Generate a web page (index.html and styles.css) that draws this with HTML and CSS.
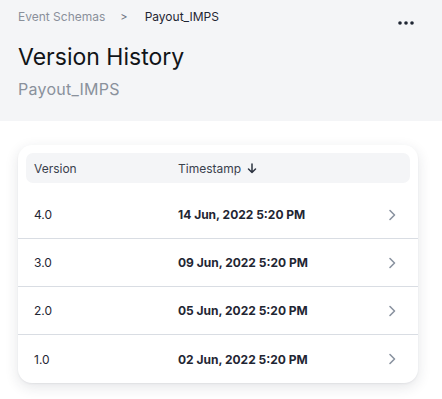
FILE: index.html
```html
<!DOCTYPE html>
<html>
<head>
<meta charset="utf-8">
<link rel="stylesheet" href="styles.css">
</head>
<body>
<header class="top">
  <div class="crumbs">
    <span class="crumb-muted">Event Schemas</span>
    <span class="crumb-sep">&gt;</span>
    <span class="crumb-current">Payout_IMPS</span>
  </div>
  <button class="more" aria-label="More">
    <svg width="16" height="4" viewBox="0 0 16 4"><circle cx="2" cy="2" r="1.8"/><circle cx="8" cy="2" r="1.8"/><circle cx="14" cy="2" r="1.8"/></svg>
  </button>
  <h1 class="title">Version History</h1>
  <div class="subtitle">Payout_IMPS</div>
</header>
<main class="content">
  <div class="card">
    <div class="thead">
      <div class="col-version">Version</div>
      <div class="col-time">Timestamp
        <svg class="arrow" width="10" height="11" viewBox="0 0 10 11"><path d="M5 1v8.5M1.5 6L5 9.5 8.5 6" fill="none" stroke="#2d3441" stroke-width="1.5" stroke-linecap="round" stroke-linejoin="round"/></svg>
      </div>
    </div>
    <div class="row">
      <div class="col-version">4.0</div>
      <div class="col-time ts">14 Jun, 2022 5:20 PM</div>
      <svg class="chev" width="8" height="12" viewBox="0 0 8 12"><path d="M2 1.5L6.5 6 2 10.5" fill="none" stroke="#8a93a0" stroke-width="1.6" stroke-linecap="round" stroke-linejoin="round"/></svg>
    </div>
    <div class="row">
      <div class="col-version">3.0</div>
      <div class="col-time ts">09 Jun, 2022 5:20 PM</div>
      <svg class="chev" width="8" height="12" viewBox="0 0 8 12"><path d="M2 1.5L6.5 6 2 10.5" fill="none" stroke="#8a93a0" stroke-width="1.6" stroke-linecap="round" stroke-linejoin="round"/></svg>
    </div>
    <div class="row">
      <div class="col-version">2.0</div>
      <div class="col-time ts">05 Jun, 2022 5:20 PM</div>
      <svg class="chev" width="8" height="12" viewBox="0 0 8 12"><path d="M2 1.5L6.5 6 2 10.5" fill="none" stroke="#8a93a0" stroke-width="1.6" stroke-linecap="round" stroke-linejoin="round"/></svg>
    </div>
    <div class="row">
      <div class="col-version">1.0</div>
      <div class="col-time ts">02 Jun, 2022 5:20 PM</div>
      <svg class="chev" width="8" height="12" viewBox="0 0 8 12"><path d="M2 1.5L6.5 6 2 10.5" fill="none" stroke="#8a93a0" stroke-width="1.6" stroke-linecap="round" stroke-linejoin="round"/></svg>
    </div>
  </div>
</main>
</body>
</html>
```
FILE: styles.css
```css
* { box-sizing: border-box; }
html, body { margin: 0; padding: 0; }
body {
  font-family: Inter, "Noto Sans", sans-serif;
  background: #ffffff;
  color: #1f2633;
  width: 442px;
  height: 399px;
  overflow: hidden;
}
.top {
  position: relative;
  background: #f4f5f7;
  height: 121px;
  padding: 9px 18px 0 18px;
}
.crumbs {
  display: flex;
  align-items: center;
  font-size: 12px;
  line-height: 16px;
}
.crumb-muted { color: #8a909b; }
.crumb-sep { color: #6b7280; margin: 0 17px 0 15px; font-size: 11px; }
.crumb-current { color: #1f2633; }
.more {
  position: absolute;
  right: 28px;
  top: 21px;
  border: 0;
  background: none;
  padding: 0;
  display: flex;
  fill: #1f2633;
}
.title {
  margin: 17px 0 0 0;
  font-size: 23px;
  line-height: 30px;
  font-weight: 400;
  letter-spacing: 0;
  color: #111418;
}
.subtitle {
  margin-top: 7px;
  font-size: 16px;
  line-height: 20px;
  letter-spacing: 0.25px;
  color: #8a919c;
}
.content {
  padding: 24px 24px 0 18px;
}
.card {
  width: 400px;
  background: #fff;
  border-radius: 14px;
  box-shadow: 0 4px 14px rgba(30, 40, 60, 0.12), 0 1px 2px rgba(30,40,60,0.06);
  padding: 8px 0 0 0;
  overflow: hidden;
}
.thead {
  margin: 0 8px 8px 8px;
  height: 30px;
  background: #f4f5f7;
  border-radius: 7px;
  display: flex;
  align-items: center;
  font-size: 12px;
  color: #3a414d;
  padding-left: 8px;
}
.thead .col-version { width: 144px; }
.thead .col-time { display: flex; align-items: center; gap: 6px; }
.row {
  height: 48px;
  display: flex;
  align-items: center;
  padding-left: 16px;
  padding-right: 22px;
  border-bottom: 1px solid #d9dde3;
  font-size: 12px;
  color: #1f2633;
}
.row:last-child { border-bottom: 0; }
.row .col-version { width: 144px; }
.row .ts { font-weight: 700; flex: 1; }
.chev { display: block; }
```
